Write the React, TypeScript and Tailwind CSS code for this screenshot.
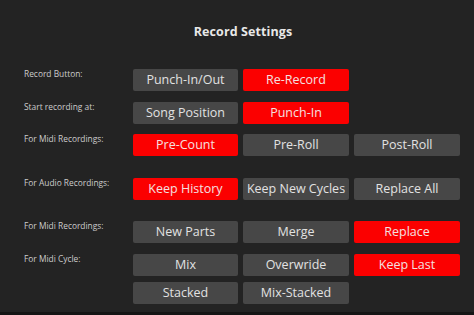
import React from 'react';

type Btn = { t: string; on?: boolean };

const rows: { label?: string; mt: string; btns: Btn[] }[] = [
  { label: 'Record Button:', mt: 'mt-[28px]', btns: [{ t: 'Punch-In/Out' }, { t: 'Re-Record', on: true }] },
  { label: 'Start recording at:', mt: 'mt-[11px]', btns: [{ t: 'Song Position' }, { t: 'Punch-In', on: true }] },
  { label: 'For Midi Recordings:', mt: 'mt-[10px]', btns: [{ t: 'Pre-Count', on: true }, { t: 'Pre-Roll' }, { t: 'Post-Roll' }] },
  { label: 'For Audio Recordings:', mt: 'mt-[22px]', btns: [{ t: 'Keep History', on: true }, { t: 'Keep New Cycles' }, { t: 'Replace All' }] },
  { label: 'For Midi Recordings:', mt: 'mt-[21px]', btns: [{ t: 'New Parts' }, { t: 'Merge' }, { t: 'Replace', on: true }] },
  { label: 'For Midi Cycle:', mt: 'mt-[11px]', btns: [{ t: 'Mix' }, { t: 'Overwride' }, { t: 'Keep Last', on: true }] },
  { mt: 'mt-[6px]', btns: [{ t: 'Stacked' }, { t: 'Mix-Stacked' }] },
];

export default function App() {
  return (
    <div
      className="flex h-[315px] w-[474px] flex-col overflow-hidden bg-[#232323] text-[#e6e6e6]"
      style={{ fontFamily: '"Open Sans", "Noto Sans", sans-serif' }}
    >
      {/* Titel */}
      <h1 className="mt-[23px] pl-[12px] text-center text-[12.5px] font-bold leading-[18px] tracking-[0.1px] text-[#e8e8e8]">
        Record Settings
      </h1>

      {rows.map((r, i) => (
        <div key={i} className={`${r.mt} flex`}>
          <div className="w-[133px] pl-[24px] text-[8.4px] leading-[10px] text-[#cccccc]">
            {r.label}
          </div>
          <div className="grid grid-cols-[105px_106px_106px] gap-[5px]">
            {r.btns.map((b) => (
              <div
                key={b.t}
                className={`flex h-[22px] items-center justify-center rounded-[2px] text-[12.5px] leading-none ${
                  b.on ? 'bg-[#fb0000] text-[#f4e0e0]' : 'bg-[#474747] text-[#e2e2e2]'
                }`}
              >
                {b.t}
              </div>
            ))}
          </div>
        </div>
      ))}

      <div className="mt-auto h-[3px] bg-[#151515]" />
    </div>
  );
}
